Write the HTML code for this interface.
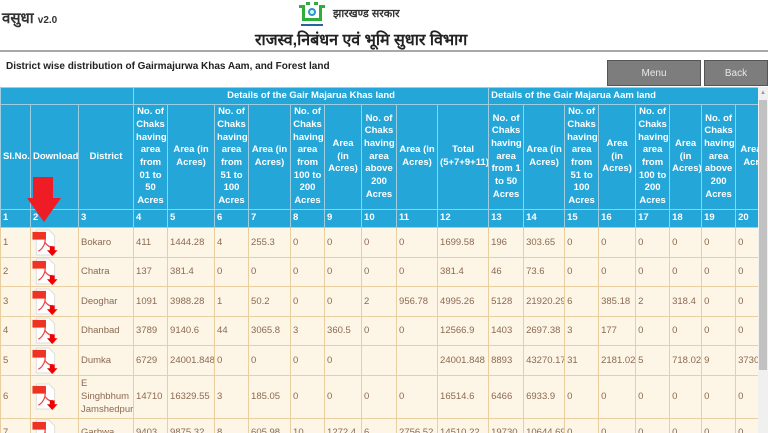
<!DOCTYPE html>
<html><head><meta charset="utf-8"><style>
*{margin:0;padding:0;box-sizing:border-box}
html,body{width:768px;height:433px;overflow:hidden}
body{background:#fff;font-family:"Liberation Sans",sans-serif;position:relative}
.brand{position:absolute;left:2px;top:8px;font-weight:bold;font-size:15px;color:#333}
.brand small{font-size:10px}
.hr{position:absolute;left:0;top:50px;width:768px;height:2px;background:#a8a8a8}
.title{position:absolute;left:6px;top:61px;font-size:10px;font-weight:bold;color:#222}
.btn{position:absolute;top:60px;height:26px;background:#7d7d7d;color:#e8e8e8;font-size:10px;text-align:center;line-height:26px;border:1px solid #555}
.wrap{position:absolute;left:0;top:87px;width:758px;height:346px;overflow:hidden}
table{border-collapse:collapse;table-layout:fixed;width:780px;font-size:9.5px}
td,th{border:1px solid #e9cfa0;padding:0 2px;overflow:hidden;white-space:nowrap}
th{background:#25a6d9;color:#fff;font-weight:bold;border-color:#9fcde0;line-height:12.7px;white-space:normal}
tr.g th{height:17px}
tr.h th{height:105px}
tr.n th{height:18px;text-align:left}
td{background:#fdf5e6;color:#8b6a52;height:29.5px;line-height:13px}
td.w{white-space:normal}
td.p{padding:0 0 0 1px}
.sb{position:absolute;left:758px;top:87px;width:10px;height:346px;background:#f0f0f0}
.thumb{position:absolute;left:759px;top:100px;width:8px;height:270px;background:#c1c1c1}
.pdf{display:block;width:26px;height:27px}
</style></head><body>
<div class="brand">वसुधा <small>v2.0</small></div>
<svg style="position:absolute;left:296px;top:1px" width="32" height="27" viewBox="0 0 32 27">
<path d="M3 4 L9 4 L9 17 L23 17 L23 4 L29 4 L29 7 L26 7 L26 20 L6 20 L6 7 L3 7Z" fill="#2fae3a"/>
<path d="M10 1h4v3h-4zM18 1h4v3h-4z" fill="#2fae3a"/>
<circle cx="16" cy="11" r="4" fill="#3a8fd0"/><circle cx="16" cy="11" r="2" fill="#bfe"/>
<rect x="5" y="23" width="22" height="2" fill="#2a60a8"/></svg>
<div style="position:absolute;left:333px;top:6px;font-size:11px;font-weight:bold;color:#333">झारखण्ड सरकार</div>
<div style="position:absolute;left:255px;top:28px;font-size:16px;font-weight:bold;color:#222">राजस्व,निबंधन एवं भूमि सुधार विभाग</div>
<div class="hr"></div>
<div class="title">District wise distribution of Gairmajurwa Khas Aam, and Forest land</div>
<div class="btn" style="left:607px;width:94px">Menu</div>
<div class="btn" style="left:704px;width:64px">Back</div>
<div class="wrap"><table>
<colgroup><col style="width:30px"><col style="width:48px"><col style="width:55px"><col style="width:34px"><col style="width:47px"><col style="width:34px"><col style="width:42px"><col style="width:34px"><col style="width:37px"><col style="width:35px"><col style="width:41px"><col style="width:51px"><col style="width:35px"><col style="width:41px"><col style="width:34px"><col style="width:37px"><col style="width:34px"><col style="width:32px"><col style="width:34px"><col style="width:45px"></colgroup>
<tr class="g"><th colspan="3"></th><th colspan="9">Details of the Gair Majarua Khas land</th><th colspan="8" style="text-align:left">Details of the Gair Majarua Aam land</th></tr>
<tr class="h"><th>Sl.No.</th><th>Download</th><th>District</th><th>No. of Chaks having area from 01 to 50 Acres</th><th>Area (in Acres)</th><th>No. of Chaks having area from 51 to 100 Acres</th><th>Area (in Acres)</th><th>No. of Chaks having area from 100 to 200 Acres</th><th>Area (in Acres)</th><th>No. of Chaks having area above 200 Acres</th><th>Area (in Acres)</th><th>Total (5+7+9+11)</th><th>No. of Chaks having area from 1 to 50 Acres</th><th>Area (in Acres)</th><th>No. of Chaks having area from 51 to 100 Acres</th><th>Area (in Acres)</th><th>No. of Chaks having area from 100 to 200 Acres</th><th>Area (in Acres)</th><th>No. of Chaks having area above 200 Acres</th><th>Area (in Acres)</th></tr>
<tr class="n"><th>1</th><th>2</th><th>3</th><th>4</th><th>5</th><th>6</th><th>7</th><th>8</th><th>9</th><th>10</th><th>11</th><th>12</th><th>13</th><th>14</th><th>15</th><th>16</th><th>17</th><th>18</th><th>19</th><th>20</th></tr>
<tr><td>1</td><td class="p"><svg class="pdf" viewBox="0 0 26 28"><path d="M4 1h13l6 6v20H4z" fill="#fff" stroke="#ddd"/><rect x="0" y="3" width="14" height="8" fill="#e32"/><path d="M13 10c1 6-4 12-7 13M13 14c3 4 6 5 8 4" stroke="#e44" stroke-width="1.3" fill="none"/><path d="M18 18h5v4h3l-5.5 6-5.5-6h3z" fill="#e00"/></svg></td><td>Bokaro</td><td>411</td><td>1444.28</td><td>4</td><td>255.3</td><td>0</td><td>0</td><td>0</td><td>0</td><td>1699.58</td><td>196</td><td>303.65</td><td>0</td><td>0</td><td>0</td><td>0</td><td>0</td><td>0</td></tr>
<tr><td>2</td><td class="p"><svg class="pdf" viewBox="0 0 26 28"><path d="M4 1h13l6 6v20H4z" fill="#fff" stroke="#ddd"/><rect x="0" y="3" width="14" height="8" fill="#e32"/><path d="M13 10c1 6-4 12-7 13M13 14c3 4 6 5 8 4" stroke="#e44" stroke-width="1.3" fill="none"/><path d="M18 18h5v4h3l-5.5 6-5.5-6h3z" fill="#e00"/></svg></td><td>Chatra</td><td>137</td><td>381.4</td><td>0</td><td>0</td><td>0</td><td>0</td><td>0</td><td>0</td><td>381.4</td><td>46</td><td>73.6</td><td>0</td><td>0</td><td>0</td><td>0</td><td>0</td><td>0</td></tr>
<tr><td>3</td><td class="p"><svg class="pdf" viewBox="0 0 26 28"><path d="M4 1h13l6 6v20H4z" fill="#fff" stroke="#ddd"/><rect x="0" y="3" width="14" height="8" fill="#e32"/><path d="M13 10c1 6-4 12-7 13M13 14c3 4 6 5 8 4" stroke="#e44" stroke-width="1.3" fill="none"/><path d="M18 18h5v4h3l-5.5 6-5.5-6h3z" fill="#e00"/></svg></td><td>Deoghar</td><td>1091</td><td>3988.28</td><td>1</td><td>50.2</td><td>0</td><td>0</td><td>2</td><td>956.78</td><td>4995.26</td><td>5128</td><td>21920.29</td><td>6</td><td>385.18</td><td>2</td><td>318.4</td><td>0</td><td>0</td></tr>
<tr><td>4</td><td class="p"><svg class="pdf" viewBox="0 0 26 28"><path d="M4 1h13l6 6v20H4z" fill="#fff" stroke="#ddd"/><rect x="0" y="3" width="14" height="8" fill="#e32"/><path d="M13 10c1 6-4 12-7 13M13 14c3 4 6 5 8 4" stroke="#e44" stroke-width="1.3" fill="none"/><path d="M18 18h5v4h3l-5.5 6-5.5-6h3z" fill="#e00"/></svg></td><td>Dhanbad</td><td>3789</td><td>9140.6</td><td>44</td><td>3065.8</td><td>3</td><td>360.5</td><td>0</td><td>0</td><td>12566.9</td><td>1403</td><td>2697.38</td><td>3</td><td>177</td><td>0</td><td>0</td><td>0</td><td>0</td></tr>
<tr><td>5</td><td class="p"><svg class="pdf" viewBox="0 0 26 28"><path d="M4 1h13l6 6v20H4z" fill="#fff" stroke="#ddd"/><rect x="0" y="3" width="14" height="8" fill="#e32"/><path d="M13 10c1 6-4 12-7 13M13 14c3 4 6 5 8 4" stroke="#e44" stroke-width="1.3" fill="none"/><path d="M18 18h5v4h3l-5.5 6-5.5-6h3z" fill="#e00"/></svg></td><td>Dumka</td><td>6729</td><td>24001.848</td><td>0</td><td>0</td><td>0</td><td>0</td><td></td><td></td><td>24001.848</td><td>8893</td><td>43270.17</td><td>31</td><td>2181.02</td><td>5</td><td>718.02</td><td>9</td><td>3730</td></tr>
<tr><td style="height:43px">6</td><td class="p"><svg class="pdf" viewBox="0 0 26 28"><path d="M4 1h13l6 6v20H4z" fill="#fff" stroke="#ddd"/><rect x="0" y="3" width="14" height="8" fill="#e32"/><path d="M13 10c1 6-4 12-7 13M13 14c3 4 6 5 8 4" stroke="#e44" stroke-width="1.3" fill="none"/><path d="M18 18h5v4h3l-5.5 6-5.5-6h3z" fill="#e00"/></svg></td><td class="w">E Singhbhum Jamshedpur</td><td>14710</td><td>16329.55</td><td>3</td><td>185.05</td><td>0</td><td>0</td><td>0</td><td>0</td><td>16514.6</td><td>6466</td><td>6933.9</td><td>0</td><td>0</td><td>0</td><td>0</td><td>0</td><td>0</td></tr>
<tr><td>7</td><td class="p"><svg class="pdf" viewBox="0 0 26 28"><path d="M4 1h13l6 6v20H4z" fill="#fff" stroke="#ddd"/><rect x="0" y="3" width="14" height="8" fill="#e32"/><path d="M13 10c1 6-4 12-7 13M13 14c3 4 6 5 8 4" stroke="#e44" stroke-width="1.3" fill="none"/><path d="M18 18h5v4h3l-5.5 6-5.5-6h3z" fill="#e00"/></svg></td><td>Garhwa</td><td>9403</td><td>9875.32</td><td>8</td><td>605.98</td><td>10</td><td>1272.4</td><td>6</td><td>2756.52</td><td>14510.22</td><td>19730</td><td>10644.69</td><td>0</td><td>0</td><td>0</td><td>0</td><td>0</td><td>0</td></tr>
</table></div>
<svg style="position:absolute;left:27px;top:177px" width="35" height="46" viewBox="0 0 35 46"><path d="M6 0h20v21h8L17 45 0 21h6z" fill="#ee1c24"/></svg>
<div class="sb"></div><div class="thumb"></div>
<div style="position:absolute;left:760px;top:90px;font-size:6px;color:#999">▲</div>
</body></html>
